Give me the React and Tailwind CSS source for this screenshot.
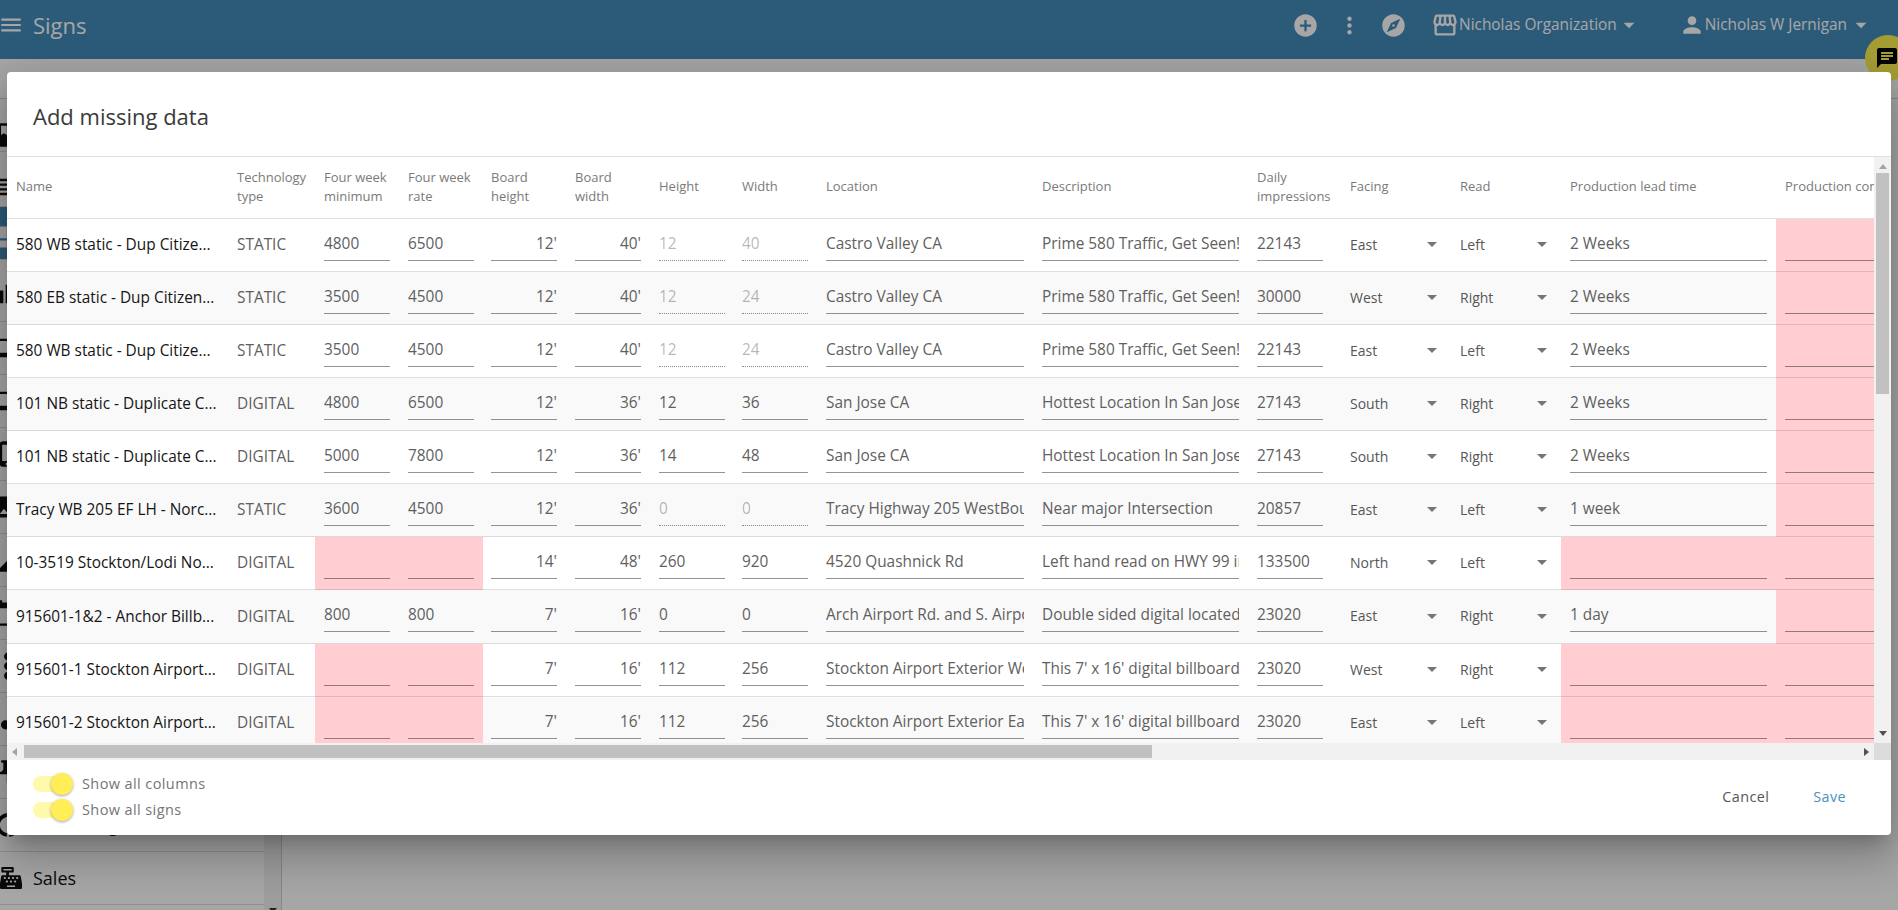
import React from "react";
import { MdMenu, MdAddCircle, MdMoreVert, MdExplore, MdStorefront, MdPerson, MdArrowDropDown, MdChat, MdBook, MdDashboard, MdPhoneIphone, MdImage, MdSignalCellular4Bar, MdCalendarToday, MdMusicNote, MdPushPin, MdDonutLarge, MdLaptop, MdViewHeadline, MdBarChart } from "react-icons/md";
import { FaCashRegister, FaEllipsisV } from "react-icons/fa";

const rows = [
  { n: "580 WB static - Dup Citize...", t: "STATIC", a: "4800", b: "6500", h: "12'", w: "40'", c: "12", d: "40", off: true, loc: "Castro Valley CA", desc: "Prime 580 Traffic, Get Seen! Lots of drivers", imp: "22143", f: "East", r: "Left", lead: "2 Weeks" },
  { n: "580 EB static - Dup Citizen...", t: "STATIC", a: "3500", b: "4500", h: "12'", w: "40'", c: "12", d: "24", off: true, loc: "Castro Valley CA", desc: "Prime 580 Traffic, Get Seen! Lots of drivers", imp: "30000", f: "West", r: "Right", lead: "2 Weeks" },
  { n: "580 WB static - Dup Citize...", t: "STATIC", a: "3500", b: "4500", h: "12'", w: "40'", c: "12", d: "24", off: true, loc: "Castro Valley CA", desc: "Prime 580 Traffic, Get Seen! Lots of drivers", imp: "22143", f: "East", r: "Left", lead: "2 Weeks" },
  { n: "101 NB static - Duplicate C...", t: "DIGITAL", a: "4800", b: "6500", h: "12'", w: "36'", c: "12", d: "36", loc: "San Jose CA", desc: "Hottest Location In San Jose CA", imp: "27143", f: "South", r: "Right", lead: "2 Weeks" },
  { n: "101 NB static - Duplicate C...", t: "DIGITAL", a: "5000", b: "7800", h: "12'", w: "36'", c: "14", d: "48", loc: "San Jose CA", desc: "Hottest Location In San Jose CA", imp: "27143", f: "South", r: "Right", lead: "2 Weeks" },
  { n: "Tracy WB 205 EF LH - Norc...", t: "STATIC", a: "3600", b: "4500", h: "12'", w: "36'", c: "0", d: "0", off: true, loc: "Tracy Highway 205 WestBound", desc: "Near major Intersection", imp: "20857", f: "East", r: "Left", lead: "1 week" },
  { n: "10-3519 Stockton/Lodi No...", t: "DIGITAL", a: "", b: "", h: "14'", w: "48'", c: "260", d: "920", loc: "4520 Quashnick Rd", desc: "Left hand read on HWY 99 in Stockton", imp: "133500", f: "North", r: "Left", lead: "" },
  { n: "915601-1&2 - Anchor Billb...", t: "DIGITAL", a: "800", b: "800", h: "7'", w: "16'", c: "0", d: "0", loc: "Arch Airport Rd. and S. Airport Way", desc: "Double sided digital located near", imp: "23020", f: "East", r: "Right", lead: "1 day" },
  { n: "915601-1 Stockton Airport...", t: "DIGITAL", a: "", b: "", h: "7'", w: "16'", c: "112", d: "256", loc: "Stockton Airport Exterior West", desc: "This 7' x 16' digital billboard is", imp: "23020", f: "West", r: "Right", lead: "" },
  { n: "915601-2 Stockton Airport...", t: "DIGITAL", a: "", b: "", h: "7'", w: "16'", c: "112", d: "256", loc: "Stockton Airport Exterior East", desc: "This 7' x 16' digital billboard is", imp: "23020", f: "East", r: "Left", lead: "" },
];

const lineCell = "border-b border-[rgba(0,0,0,0.12)]";

function Field({ value, right, off, w }) {
  return (
    <div className={`${w} h-[33px] overflow-hidden whitespace-nowrap text-[15.4px] leading-[32px] ${right ? "text-right" : ""} ${off ? "border-b border-dotted border-[rgba(0,0,0,0.45)] text-[rgba(0,0,0,0.3)]" : "border-b border-[rgba(0,0,0,0.42)] text-[#5f5f5f]"}`}>
      {value}
    </div>
  );
}

function FieldCell({ value, right, off, w, pl, missing }) {
  return (
    <td className={`${lineCell} ${pl} pt-[9px] align-top ${missing ? "bg-[#ffcdd2]" : ""}`}>
      <Field value={value} right={right} off={off} w={w} />
    </td>
  );
}

function SelectCell({ value }) {
  return (
    <td className={`${lineCell} pb-[2px] pl-[9px] align-middle`}>
      <div className="flex w-[94px] items-center justify-between text-[#565656]">
        <span>{value}</span>
        <MdArrowDropDown className="text-[24px] text-[#757575]" />
      </div>
    </td>
  );
}

function Head({ children, pl = "pl-[9px]" }) {
  return <th className={`${lineCell} ${pl} pb-[2px] pr-0 text-left align-middle text-[13px] font-normal leading-[19px] text-[#7a7a7a]`}>{children}</th>;
}

function Toggle({ label }) {
  return (
    <div className="flex h-[26px] items-center">
      <div className="relative h-[16px] w-[24px] rounded-l-full bg-[#fff9ab]">
        <div className="absolute left-[18px] top-[-3px] h-[22px] w-[22px] rounded-full bg-[#ffee58] shadow-[0_1px_3px_rgba(0,0,0,0.35)]" />
      </div>
      <div className="ml-[25px] text-[14.5px] tracking-[0.4px] text-[#757575]">{label}</div>
    </div>
  );
}

const side = [
  { I: MdBook, h: "h-[53px]", p: "pt-[19px]", l: "Dashboard" },
  { I: MdViewHeadline, h: "h-[55px]", p: "pt-[15px]", l: "Lists" },
  { I: MdDashboard, h: "h-[53px]", p: "pt-[7px]", l: "Signs", active: true },
  { I: MdBarChart, h: "h-[62px]", p: "pt-[6px]", l: "Reports" },
  { I: MdLaptop, h: "h-[53px]", l: "Devices" },
  { I: MdLaptop, h: "h-[53px]", l: "Screens" },
  { I: MdPhoneIphone, h: "h-[53px]", l: "Mobile" },
  { I: MdImage, h: "h-[53px]", l: "Images" },
  { I: MdSignalCellular4Bar, h: "h-[53px]", l: "Network" },
  { I: MdCalendarToday, h: "h-[53px]", l: "Calendar" },
  { I: FaEllipsisV, h: "h-[53px]", l: "More" },
  { I: MdMusicNote, h: "h-[53px]", l: "Media" },
  { I: MdPushPin, h: "h-[53px]", l: "Locations" },
  { I: MdDonutLarge, h: "h-[53px]", l: "Marketing" },
  { I: FaCashRegister, h: "h-[53px]", l: "Sales", small: true },
];

export default function App() {
  return (
    <div className="relative h-[910px] w-full overflow-hidden bg-white font-['Open_Sans',sans-serif] text-[14px]">
      {/* page behind the dialog */}
      <header className="flex h-[59px] items-center bg-[#448cbc] pb-[9px] text-white">
        <MdMenu className="ml-[-2px] text-[26px]" />
        <div className="ml-[9px] text-[22px]">Signs</div>
        <div className="ml-auto flex items-center">
          <MdAddCircle className="text-[27px]" />
          <MdMoreVert className="ml-[17px] text-[27px]" />
          <MdExplore className="ml-[17px] text-[27px]" />
          <MdStorefront className="ml-[24px] text-[28px]" />
          <span className="text-[15.4px]">Nicholas Organization</span>
          <MdArrowDropDown className="ml-[-1px] text-[26px]" />
          <MdPerson className="ml-[37px] text-[26px]" />
          <span className="text-[15.4px]">Nicholas W Jernigan</span>
          <MdArrowDropDown className="ml-[1px] text-[26px]" />
          <div className="w-[24px]" />
        </div>
      </header>
      <div className="h-[40px] border-b border-[#cfcfcf]" />
      <div className="flex">
        <aside className="flex h-[812px] w-[282px] border-r border-[#cfcfcf]">
          <div className="w-[264px]">
            {side.map((s) => (
              <div key={s.l} className={`${s.h} ${s.p || ""} flex items-center border-b border-[#dcdcdc] ${s.active ? "bg-[#448cbc] text-white" : "text-[#111]"}`}>
                <s.I className="ml-[-6px] text-[28px]" style={s.small ? { marginLeft: 0, fontSize: 22 } : undefined} />
                <span className="ml-[11px] text-[18px]">{s.l}</span>
              </div>
            ))}
          </div>
          <div className="flex w-[17px] flex-col items-center justify-end bg-[#f1f1f1]">
            <div className="mb-[-2px] h-0 w-0 border-x-[4px] border-t-[5px] border-x-transparent border-t-[#333]" />
          </div>
        </aside>
      </div>

      {/* chat bubble */}
      <div className="absolute left-[1865px] top-[35px] flex h-[46px] w-[46px] items-center rounded-full bg-[#fff350]">
        <MdChat className="ml-[10px] text-[24px] text-black" />
      </div>

      {/* backdrop */}
      <div className="absolute inset-0 bg-black/35" />

      {/* dialog */}
      <div className="absolute left-[7px] top-[72px] flex h-[763px] w-[1884px] flex-col overflow-hidden rounded-[4px] bg-white shadow-[0_11px_15px_-7px_rgba(0,0,0,0.2),0_24px_38px_3px_rgba(0,0,0,0.14),0_9px_46px_8px_rgba(0,0,0,0.12)]">
        <div className="flex h-[84px] items-center pl-[26px] pt-[5px] text-[22px] text-[#3a3a3a]">Add missing data</div>
        <div className="flex h-[587px] border-t border-[#e0e0e0]">
          <div className="w-[1867px] overflow-hidden">
            <table className="w-[1984px] table-fixed border-separate border-spacing-0">
              <colgroup>
                {[221, 87, 84, 84, 84, 83, 84, 83, 216, 215, 93, 110, 110, 215, 215].map((w, i) => (
                  <col key={i} style={{ width: w }} />
                ))}
              </colgroup>
              <thead>
                <tr className="h-[62px]">
                  <Head>Name</Head>
                  <Head>Technology<br />type</Head>
                  <Head>Four week<br />minimum</Head>
                  <Head>Four week<br />rate</Head>
                  <Head pl="pl-[8px]">Board<br />height</Head>
                  <Head pl="pl-[8px]">Board<br />width</Head>
                  <Head>Height</Head>
                  <Head pl="pl-[8px]">Width</Head>
                  <Head>Location</Head>
                  <Head>Description</Head>
                  <Head>Daily<br />impressions</Head>
                  <Head>Facing</Head>
                  <Head>Read</Head>
                  <Head>Production lead time</Head>
                  <Head>Production contact</Head>
                </tr>
              </thead>
              <tbody>
                {rows.map((r, i) => (
                  <tr key={i} className={`${i === 7 ? "h-[54px]" : "h-[53px]"} ${i % 2 ? "bg-[#f9f9f9]" : "bg-white"}`}>
                    <td className={`${lineCell} whitespace-nowrap pl-[9px] align-middle text-[15.4px] text-[#151515]`}>{r.n}</td>
                    <td className={`${lineCell} pl-[9px] align-middle text-[15.4px] text-[#5f5f5f]`}>{r.t}</td>
                    <FieldCell value={r.a} w="w-[66px]" pl="pl-[9px]" missing={!r.a} />
                    <FieldCell value={r.b} w="w-[66px]" pl="pl-[9px]" missing={!r.b} />
                    <FieldCell value={r.h} w="w-[66px]" pl="pl-[8px]" right />
                    <FieldCell value={r.w} w="w-[66px]" pl="pl-[8px]" right />
                    <FieldCell value={r.c} w="w-[66px]" pl="pl-[9px]" off={r.off} />
                    <FieldCell value={r.d} w="w-[66px]" pl="pl-[8px]" off={r.off} />
                    <FieldCell value={r.loc} w="w-[198px]" pl="pl-[9px]" />
                    <FieldCell value={r.desc} w="w-[197px]" pl="pl-[9px]" />
                    <FieldCell value={r.imp} w="w-[66px]" pl="pl-[9px]" />
                    <SelectCell value={r.f} />
                    <SelectCell value={r.r} />
                    <FieldCell value={r.lead} w="w-[197px]" pl="pl-[9px]" missing={!r.lead} />
                    <FieldCell value="" w="w-[197px]" pl="pl-[9px]" missing />
                  </tr>
                ))}
              </tbody>
            </table>
          </div>
          {/* vertical scrollbar */}
          <div className="flex w-[17px] flex-col items-center bg-[#f1f1f1]">
            <div className="mt-[7px] h-0 w-0 border-x-[4px] border-b-[5px] border-x-transparent border-b-[#a3a3a3]" />
            <div className="mt-[4px] h-[221px] w-[13px] bg-[#c1c1c1]" />
            <div className="mt-auto mb-[7px] h-0 w-0 border-x-[4px] border-t-[5px] border-x-transparent border-t-[#505050]" />
          </div>
        </div>
        {/* horizontal scrollbar */}
        <div className="flex h-[17px]">
          <div className="flex flex-1 items-center bg-[#f1f1f1] pr-[5px]">
            <div className="ml-[5px] h-0 w-0 border-y-[4px] border-r-[5px] border-y-transparent border-r-[#a3a3a3]" />
            <div className="ml-[7px] h-[13px] w-[1128px] bg-[#c1c1c1]" />
            <div className="ml-auto h-0 w-0 border-y-[4px] border-l-[5px] border-y-transparent border-l-[#505050]" />
          </div>
          <div className="w-[17px] bg-[#dcdcdc]" />
        </div>
        {/* footer */}
        <div className="flex flex-1 items-center justify-between">
          <div className="ml-[26px] mt-[-1px]">
            <Toggle label="Show all columns" />
            <Toggle label="Show all signs" />
          </div>
          <div className="mr-[45px] mt-[-1px] flex items-center text-[14.4px] tracking-[0.4px]">
            <span className="text-[#565656]">Cancel</span>
            <span className="ml-[44px] text-[#4b90c0]">Save</span>
          </div>
        </div>
      </div>
    </div>
  );
}
